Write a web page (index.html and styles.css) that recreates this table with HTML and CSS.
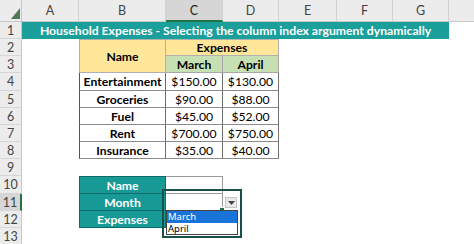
FILE: index.html
```html
<!DOCTYPE html>
<html>
<head>
<meta charset="utf-8">
<link rel="stylesheet" href="styles.css">
</head>
<body>
<div class="sheet">
  <div class="hd corner"><span class="tri"></span></div>
  <div class="hd col">A</div>
  <div class="hd col">B</div>
  <div class="hd col sel-col">C</div>
  <div class="hd col">D</div>
  <div class="hd col">E</div>
  <div class="hd col">F</div>
  <div class="hd col">G</div>
  <div class="hd col last"></div>

  <div class="rn r1">1</div>
  <div class="rn r2">2</div>
  <div class="rn r3">3</div>
  <div class="rn r4">4</div>
  <div class="rn r5">5</div>
  <div class="rn r6">6</div>
  <div class="rn r7">7</div>
  <div class="rn r8">8</div>
  <div class="rn r9">9</div>
  <div class="rn r10">10</div>
  <div class="rn r11 sel-row">11</div>
  <div class="rn r12">12</div>
  <div class="rn r13">13</div>

  <div class="title r1">Household Expenses - Selecting the column index argument dynamically</div>

  <div class="cell yellow bold name-head cB first-col top-row">Name</div>
  <div class="cell yellow bold exp-head r2 top-row">Expenses</div>
  <div class="cell green bold r3 cC">March</div>
  <div class="cell green bold r3 cD">April</div>

  <div class="cell bold r4 cB first-col">Entertainment</div>
  <div class="cell r4 cC">$150.00</div>
  <div class="cell r4 cD">$130.00</div>

  <div class="cell bold r5 cB first-col">Groceries</div>
  <div class="cell r5 cC">$90.00</div>
  <div class="cell r5 cD">$88.00</div>

  <div class="cell bold r6 cB first-col">Fuel</div>
  <div class="cell r6 cC">$45.00</div>
  <div class="cell r6 cD">$52.00</div>

  <div class="cell bold r7 cB first-col">Rent</div>
  <div class="cell r7 cC">$700.00</div>
  <div class="cell r7 cD">$750.00</div>

  <div class="cell bold r8 cB first-col">Insurance</div>
  <div class="cell r8 cC">$35.00</div>
  <div class="cell r8 cD">$40.00</div>

  <div class="label r10 cB label-top">Name</div>
  <div class="label r11 cB">Month</div>
  <div class="label r12 cB">Expenses</div>

  <div class="input r10 cC"></div>
  <div class="active r11 cC"><span class="handle"></span></div>

  <div class="dropframe">
    <div class="drop-btn"><svg width="7" height="4" viewBox="0 0 7 4"><path d="M0 0h7L3.5 4z" fill="#444"/></svg></div>
    <div class="droplist">
      <div class="opt hi">March</div>
      <div class="opt">April</div>
    </div>
  </div>
</div>
</body>
</html>
```
FILE: styles.css
```css
html, body {
  margin: 0;
  padding: 0;
  background: #ffffff;
}

.sheet {
  position: relative;
  width: 474px;
  height: 244px;
  overflow: hidden;
  display: grid;
  grid-template-columns: 22px 57px 87px 57px 56px 58px 56px 56px 1fr;
  grid-template-rows: 22px 17px 17px 17px 18px 17px 17px 17px 17px 17px 18px 17px 17px 17px;
  font-family: Lato, "Open Sans", sans-serif;
  font-size: 12.2px;
  color: #000;
}

.hd {
  grid-row: 1;
  background: #ececec;
  border-bottom: 1px solid #c8c8c8;
  box-sizing: border-box;
  display: flex;
  align-items: center;
  justify-content: center;
  color: #444;
  font-size: 12.5px;
}

.col {
  border-right: 1px solid #d2d2d2;
}

.col.last {
  border-right: none;
}

.corner {
  grid-column: 1;
  position: relative;
  border-right: 1px solid #c8c8c8;
}

.tri {
  position: absolute;
  right: 1px;
  bottom: 2px;
  width: 0;
  height: 0;
  border-left: 9px solid transparent;
  border-bottom: 11px solid #4a7a58;
}

.sel-col {
  background: #d6d6d6;
  border-bottom: 2px solid #217346;
  color: #222;
}

.rn {
  grid-column: 1;
  background: #ececec;
  border-right: 1px solid #c8c8c8;
  border-bottom: 1px solid #d6d6d6;
  box-sizing: border-box;
  display: flex;
  align-items: center;
  justify-content: center;
  color: #444;
  font-size: 12.5px;
}

.sel-row {
  background: #d6d6d6;
  border-right: 2px solid #217346;
}

.r1 { grid-row: 2; }
.r2 { grid-row: 3; }
.r3 { grid-row: 4; }
.r4 { grid-row: 5; }
.r5 { grid-row: 6; }
.r6 { grid-row: 7; }
.r7 { grid-row: 8; }
.r8 { grid-row: 9; }
.r9 { grid-row: 10; }
.r10 { grid-row: 11; }
.r11 { grid-row: 12; }
.r12 { grid-row: 13; }
.r13 { grid-row: 14; }

.cB { grid-column: 3; }
.cC { grid-column: 4; }
.cD { grid-column: 5; }

.title {
  grid-column: 2 / 9;
  background: #1a9f9b;
  color: #fff;
  font-weight: 700;
  display: flex;
  align-items: center;
  justify-content: center;
  font-size: 12.2px;
}

.cell {
  box-sizing: border-box;
  border-right: 1px solid #6e6e6e;
  border-bottom: 1px solid #8a8a8a;
  display: flex;
  align-items: center;
  justify-content: center;
  white-space: nowrap;
}

.first-col { border-left: 1px solid #555; }
.top-row { border-top: 1px solid #999; }

.bold { font-weight: 700; }

.yellow { background: #ffe699; border-color: #b0b0b0; }
.green { background: #c6e0b4; border-color: #a8a8a8; }

.name-head { grid-row: 3 / 5; }
.exp-head { grid-column: 4 / 6; }

.label {
  box-sizing: border-box;
  background: #179995;
  color: #fff;
  font-weight: 700;
  display: flex;
  align-items: center;
  justify-content: center;
  border-left: 1px solid #0f6b67;
  border-right: 1px solid #0f6b67;
  border-bottom: 1px solid #0f6b67;
}

.label-top { border-top: 1px solid #0f6b67; }

.input {
  box-sizing: border-box;
  border-top: 1px solid #9a9a9a;
  border-right: 1px solid #9a9a9a;
  border-bottom: 1px solid #9a9a9a;
}

.active {
  position: relative;
  box-sizing: border-box;
  border-right: 1px solid #9a9a9a;
  border-bottom: 1px solid #217346;
}

.handle {
  position: absolute;
  right: -3px;
  bottom: -3px;
  width: 4px;
  height: 4px;
  background: #217346;
  border: 1px solid #fff;
}

.dropframe {
  position: absolute;
  left: 162px;
  top: 189px;
  width: 80px;
  height: 49px;
  box-sizing: border-box;
  border: 2px solid #1b4f4b;
}

.drop-btn {
  position: absolute;
  left: 61px;
  top: 6px;
  width: 12px;
  height: 11px;
  box-sizing: border-box;
  background: #e9e9e9;
  border: 1px solid #c4c4c4;
  display: flex;
  align-items: center;
  justify-content: center;
}

.droplist {
  position: absolute;
  left: 2px;
  top: 19px;
  width: 72px;
  height: 25px;
  box-sizing: border-box;
  border: 1px solid #444;
  background: #fff;
  padding: 0;
  font-family: "Noto Sans", "Open Sans", sans-serif;
  font-size: 9.5px;
}

.opt {
  height: 11.5px;
  line-height: 11.5px;
  padding-left: 1px;
  color: #000;
}

.opt.hi {
  background: #1a73d9;
  color: #fff;
}
```
